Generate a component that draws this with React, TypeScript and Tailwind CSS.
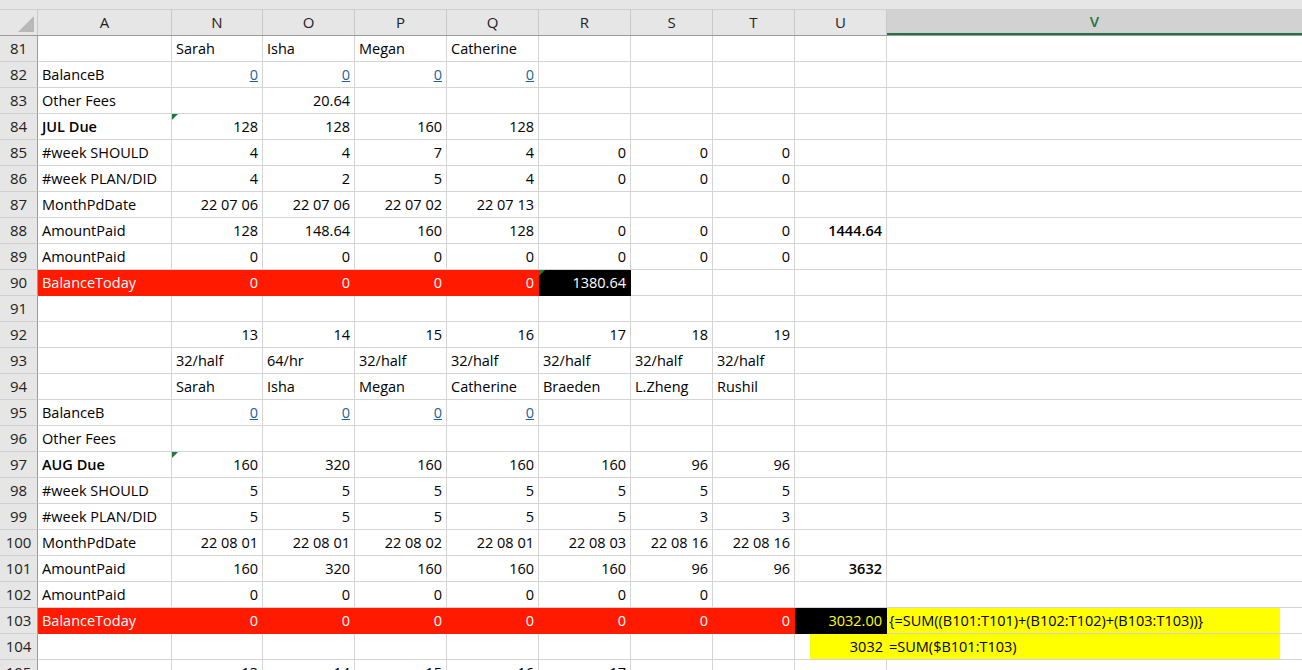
import React from "react";

const W = [38, 134, 91, 92, 92, 92, 92, 82, 82, 92];
const COLS = ["A", "N", "O", "P", "Q", "R", "S", "T", "U"];

type C = string | { t: string; u?: boolean; b?: boolean; l?: boolean; tri?: boolean };
type Row = { n: number; a?: string; ab?: boolean; cells: C[]; red?: number; black?: number; u?: C; v?: string; ublack?: boolean; yellow?: boolean };

const L = (t: string) => ({ t, l: true });
const U0 = { t: "0", u: true };

const rows: Row[] = [
  { n: 81, cells: [L("Sarah"), L("Isha"), L("Megan"), L("Catherine")] },
  { n: 82, a: "BalanceB", cells: [U0, U0, U0, U0] },
  { n: 83, a: "Other Fees", cells: ["", "20.64"] },
  { n: 84, a: "JUL Due", ab: true, cells: [{ t: "128", tri: true }, "128", "160", "128"] },
  { n: 85, a: "#week SHOULD", cells: ["4", "4", "7", "4", "0", "0", "0"] },
  { n: 86, a: "#week PLAN/DID", cells: ["4", "2", "5", "4", "0", "0", "0"] },
  { n: 87, a: "MonthPdDate", cells: ["22 07 06", "22 07 06", "22 07 02", "22 07 13"] },
  { n: 88, a: "AmountPaid", cells: ["128", "148.64", "160", "128", "0", "0", "0"], u: { t: "1444.64", b: true } },
  { n: 89, a: "AmountPaid", cells: ["0", "0", "0", "0", "0", "0", "0"] },
  { n: 90, a: "BalanceToday", cells: ["0", "0", "0", "0", "1380.64"], red: 4, black: 4 },
  { n: 91, cells: [] },
  { n: 92, cells: ["13", "14", "15", "16", "17", "18", "19"] },
  { n: 93, cells: ["32/half", "64/hr", "32/half", "32/half", "32/half", "32/half", "32/half"].map(L) },
  { n: 94, cells: ["Sarah", "Isha", "Megan", "Catherine", "Braeden", "L.Zheng", "Rushil"].map(L) },
  { n: 95, a: "BalanceB", cells: [U0, U0, U0, U0] },
  { n: 96, a: "Other Fees", cells: [] },
  { n: 97, a: "AUG Due", ab: true, cells: [{ t: "160", tri: true }, "320", "160", "160", "160", "96", "96"] },
  { n: 98, a: "#week SHOULD", cells: ["5", "5", "5", "5", "5", "5", "5"] },
  { n: 99, a: "#week PLAN/DID", cells: ["5", "5", "5", "5", "5", "3", "3"] },
  { n: 100, a: "MonthPdDate", cells: ["22 08 01", "22 08 01", "22 08 02", "22 08 01", "22 08 03", "22 08 16", "22 08 16"] },
  { n: 101, a: "AmountPaid", cells: ["160", "320", "160", "160", "160", "96", "96"], u: { t: "3632", b: true } },
  { n: 102, a: "AmountPaid", cells: ["0", "0", "0", "0", "0", "0"] },
  { n: 103, a: "BalanceToday", cells: ["0", "0", "0", "0", "0", "0", "0"], red: 7, u: "3032.00", ublack: true, v: "{=SUM((B101:T101)+(B102:T102)+(B103:T103))}" },
  { n: 104, cells: [], u: "3032", v: "=SUM($B101:T103)", yellow: true },
  { n: 105, cells: ["13", "14", "15", "16", "17"] },
];

function Cell({ c, w, cls, tri }: { c: C; w: number; cls: string; tri?: boolean }) {
  const o = typeof c === "string" ? { t: c } : c;
  return (
    <div style={{ width: w }} className={`relative h-full shrink-0 border-r border-b border-[#d4d4d4] px-[4px] flex items-center overflow-hidden whitespace-nowrap ${o.l ? "justify-start" : "justify-end"} ${cls}`}>
      {(o.tri || tri) && <div className="absolute left-0 top-0 w-0 h-0 border-t-[6px] border-t-[#1e7a3c] border-r-[6px] border-r-transparent" />}
      <span className={`${o.u ? "underline text-[#1f5f99]" : ""} ${o.b ? "font-semibold" : ""}`}>{o.t}</span>
    </div>
  );
}

export default function App() {
  return (
    <div className="w-[1302px] h-[670px] overflow-hidden bg-white text-[14.5px] text-black" style={{ fontFamily: "'Open Sans', 'Noto Sans', sans-serif" }}>
      <div className="h-[10px] bg-[#e6e6e6] border-b border-[#d0d0d0]" />
      <div className="flex h-[26px] bg-[#e6e6e6] border-b border-[#9b9b9b] text-[15px]">
        <div style={{ width: W[0] }} className="shrink-0 relative border-r border-[#c8c8c8]">
          <div className="absolute right-[3px] bottom-[3px] w-0 h-0 border-l-[16px] border-l-transparent border-b-[16px] border-b-[#b8b8b8]" />
        </div>
        {COLS.map((c, i) => (
          <div key={c} style={{ width: W[i + 1] }} className="shrink-0 border-r border-[#c8c8c8] flex items-center justify-center text-[#222]">{c}</div>
        ))}
        <div className="flex-1 flex items-center justify-center bg-[#d2d2d2] border-b-2 border-[#217346] text-[#217346] font-semibold">V</div>
      </div>
      {rows.map((r) => (
        <div key={r.n} className="flex h-[26px]">
          <div style={{ width: W[0] }} className="shrink-0 bg-[#e6e6e6] border-r border-[#9b9b9b] border-b border-b-[#d0d0d0] flex items-center justify-center text-[15px] text-[#222]">{r.n}</div>
          <Cell c={{ t: r.a ?? "", l: true, b: r.ab }} w={W[1]} cls={r.red !== undefined ? "bg-[#ff1a00] text-white border-[#ff1a00]" : ""} />
          {Array.from({ length: 7 }).map((_, i) => {
            const c = r.cells[i] ?? "";
            let cls = "";
            if (r.black === i) cls = "bg-black text-white border-black";
            else if (r.red !== undefined && i < r.red) cls = "bg-[#ff1a00] text-white border-[#ff1a00]";
            return <Cell key={i} c={c} w={W[i + 2]} cls={cls} tri={r.black === i} />;
          })}
          {r.ublack ? (
            <Cell c={r.u!} w={W[9]} cls="bg-black text-[#ffff00] border-black" />
          ) : r.yellow ? (
            <div style={{ width: W[9] }} className="shrink-0 h-full border-b border-[#d4d4d4] pl-[15px]">
              <div className="h-full bg-[#ffff00] flex items-center justify-end px-[4px]">{typeof r.u === "string" ? r.u : ""}</div>
            </div>
          ) : (
            <Cell c={r.u ?? ""} w={W[9]} cls="" />
          )}
          <div className="flex-1 h-full border-b border-[#d4d4d4]">
            {r.v && (
              <div className="w-[393px] h-full bg-[#ffff00] flex items-center px-[2px] whitespace-nowrap">{r.v}</div>
            )}
          </div>
        </div>
      ))}
    </div>
  );
}
